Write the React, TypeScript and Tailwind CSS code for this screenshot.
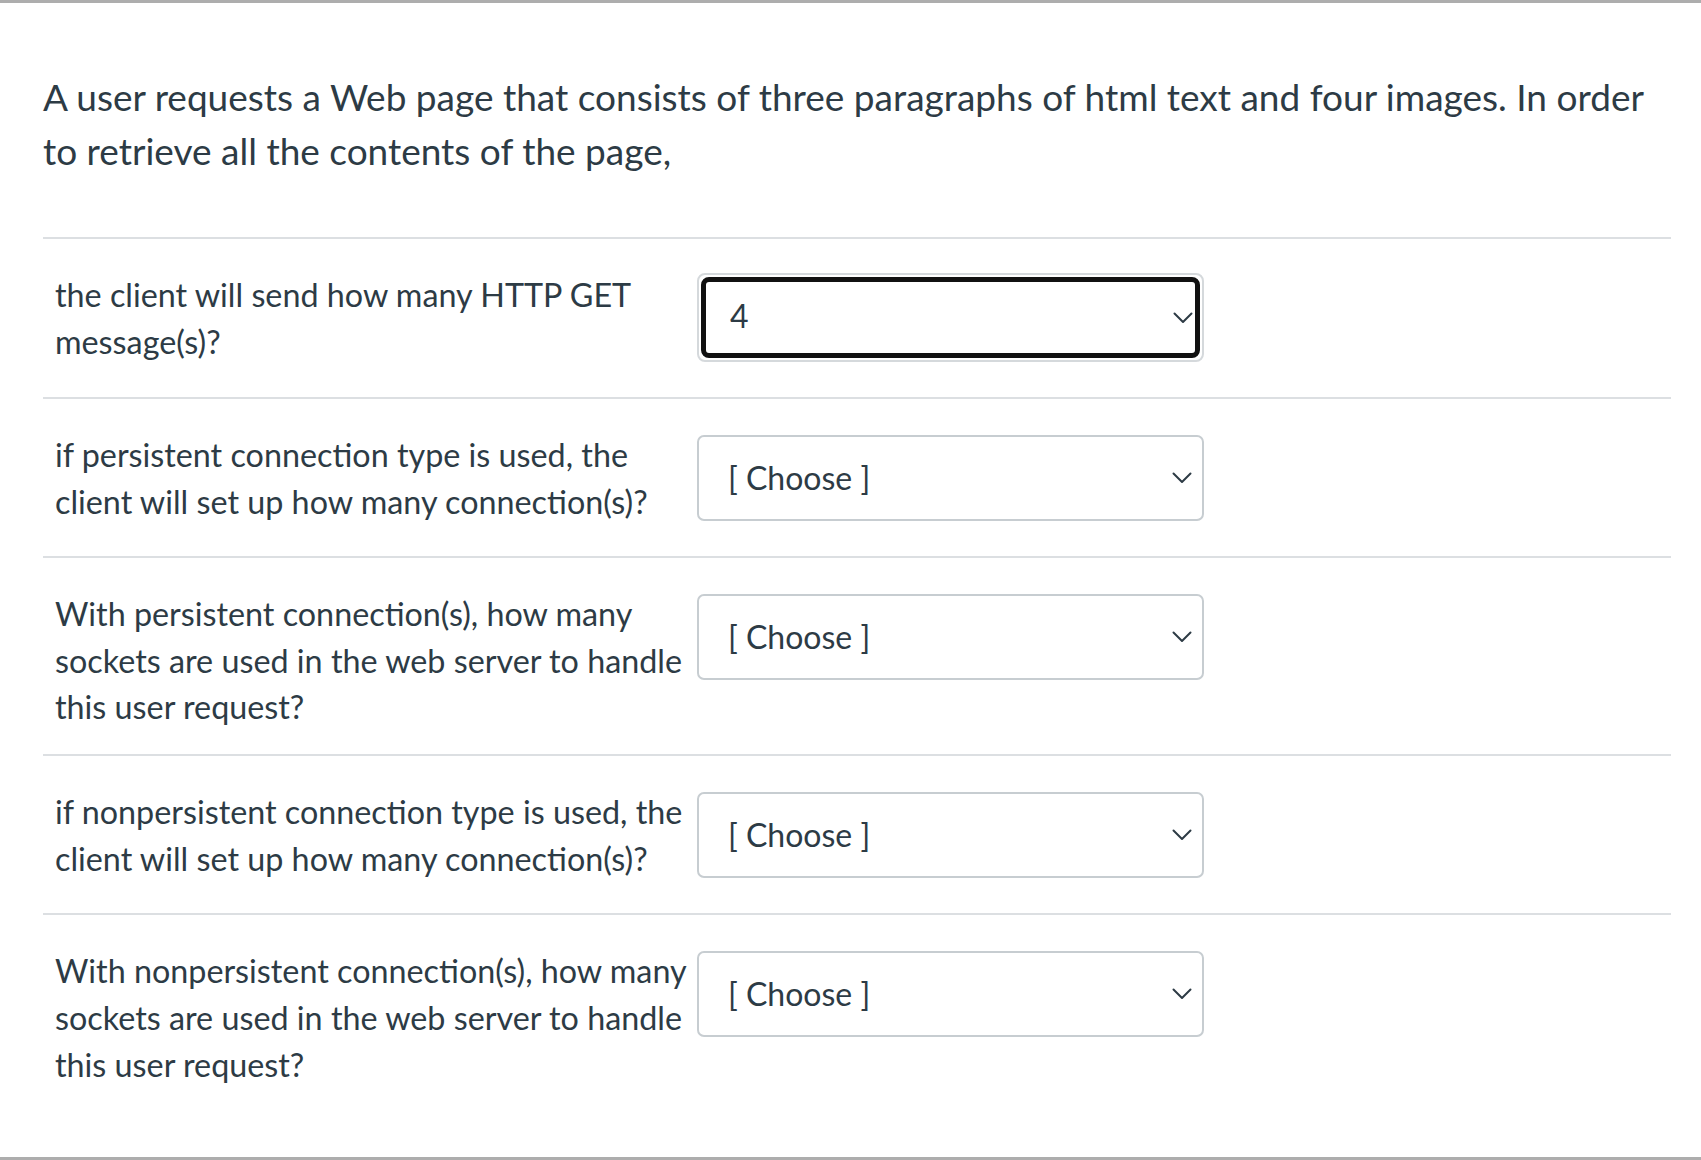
import React from 'react'

const questions = [
  { label: 'the client will send how many HTTP GET message(s)?', value: '4', focused: true },
  { label: 'if persistent connection type is used, the client will set up how many connection(s)?', value: '[ Choose ]' },
  { label: 'With persistent connection(s), how many sockets are used in the web server to handle this user request?', value: '[ Choose ]' },
  { label: 'if nonpersistent connection type is used, the client will set up how many connection(s)?', value: '[ Choose ]' },
  { label: 'With nonpersistent connection(s), how many sockets are used in the web server to handle this user request?', value: '[ Choose ]' },
]

function Chevron() {
  return (
    <svg width="20" height="12" viewBox="0 0 20 12" fill="none" className="shrink-0">
      <path d="M1.5 1.5 L10 10 L18.5 1.5" stroke="#2d3b45" strokeWidth="2" strokeLinecap="round" strokeLinejoin="round" />
    </svg>
  )
}

function Dropdown({ value, focused }: { value: string; focused?: boolean }) {
  if (focused) {
    return (
      <div className="w-[507px] h-[89px] rounded-[8px] border-2 border-[#d5d9dc] p-[2px] bg-white">
        <div className="h-full rounded-[8px] border-[5px] border-[#111] flex items-center justify-between pl-[24px] pr-[2px]">
          <span className="text-[32px] leading-none text-[#2d3b45] -mt-[4px]">{value}</span>
          <Chevron />
        </div>
      </div>
    )
  }
  return (
    <div className="w-[507px] h-[86px] rounded-[7px] border-2 border-[#c7cdd1] bg-white flex items-center justify-between pl-[29px] pr-[10px]">
      <span className="text-[32px] leading-none text-[#2d3b45]">{value}</span>
      <Chevron />
    </div>
  )
}

export default function App() {
  return (
    <div
      className="h-[1160px] bg-white border-t-[3px] border-b-[3px] border-[#adadad] overflow-hidden"
      style={{ fontFamily: 'Lato, "Open Sans", sans-serif' }}
    >
      <div className="pl-[43px] pr-[30px]">
        <p className="pt-[67px] pb-[59px] text-[37px] leading-[54px] text-[#2d3b45] pr-[20px]">
          A user requests a Web page that consists of three paragraphs of html text and four images. In order to retrieve all the contents of the page,
        </p>
        <div>
          {questions.map((q, i) => (
            <div key={i} className="border-t-2 border-[#dcdfe2] flex items-start pl-[12px] pt-[36px] pb-[23px]">
              <div className="w-[642px] -mt-[3px] text-[32.3px] leading-[46.7px] text-[#2d3b45]">{q.label}</div>
              <div className={q.focused ? '-mt-[2px] mb-[12px]' : 'mb-[12px]'}>
                <Dropdown value={q.value} focused={q.focused} />
              </div>
            </div>
          ))}
        </div>
      </div>
    </div>
  )
}
